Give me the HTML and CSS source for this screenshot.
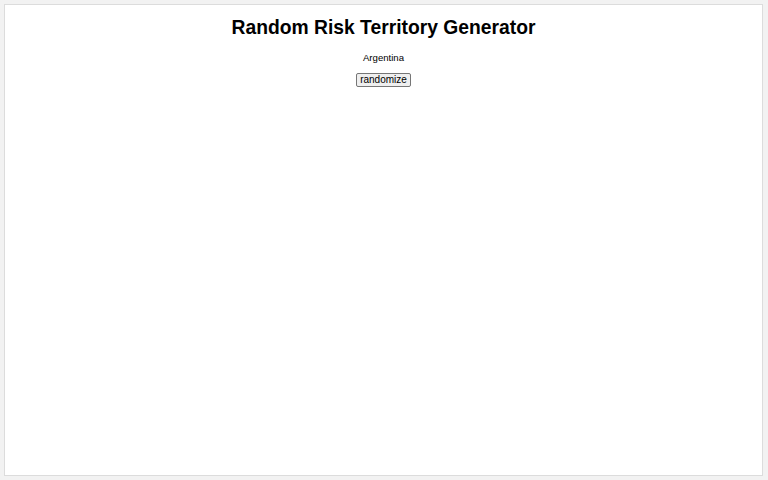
FILE: index.html
```html
<!DOCTYPE html>
<html lang="en">
<head>
  <meta charset="UTF-8" />
  <title>Random Risk Territory Generator</title>
  <link rel="stylesheet" href="styles.css">
</head>
<body>

  <main class="page">
    <h1 class="title">Random Risk Territory Generator</h1>
    <p id="territory" class="territory">Argentina</p>
    <button class="randomize-button" onclick="randomize()">randomize</button>
  </main>

  <script>
    const territories = [
      'Alaska', 'Alberta', 'Central America', 'Eastern United States', 'Greenland',
      'Northwest Territory', 'Ontario', 'Quebec', 'Western United States',
      'Argentina', 'Brazil', 'Peru', 'Venezuela',
      'Great Britain', 'Iceland', 'Northern Europe', 'Scandinavia', 'Southern Europe', 'Ukraine', 'Western Europe',
      'Congo', 'East Africa', 'Egypt', 'Madagascar', 'North Africa', 'South Africa',
      'Afghanistan', 'China', 'India', 'Irkutsk', 'Japan', 'Kamchatka', 'Middle East',
      'Mongolia', 'Siam', 'Siberia', 'Ural', 'Yakutsk',
      'Eastern Australia', 'Indonesia', 'New Guinea', 'Western Australia'
    ];

    function randomize() {
      const pick = territories[Math.floor(Math.random() * territories.length)];
      document.getElementById('territory').textContent = pick;
    }
  </script>

</body>
</html>
```

FILE: styles.css
```css
html, body {
  height: 100%;
}

body {
  margin: 0;
  padding: 4px 5px 4px 4px;
  box-sizing: border-box;
  background: #f2f2f2;
  font-family: "Liberation Sans", Arial, sans-serif;
  color: black;
}

.page {
  height: 100%;
  box-sizing: border-box;
  background: white;
  border: 1px solid #dcdcdc;
  text-align: center;
  padding-top: 11px;
}

.title {
  margin: 0;
  font-size: 19.3px;
  font-weight: bold;
  line-height: 24px;
}

.territory {
  margin: 12px 0 9px;
  font-size: 9.6px;
  line-height: 12px;
}

.randomize-button {
  display: block;
  margin: 0 auto;
  font-family: "Liberation Sans", Arial, sans-serif;
  font-size: 10px;
  padding: 1px 3px;
  line-height: 10px;
  height: 14px;
  border: 1px solid #767676;
  border-radius: 2px;
  background: #efefef;
  color: black;
}
```
